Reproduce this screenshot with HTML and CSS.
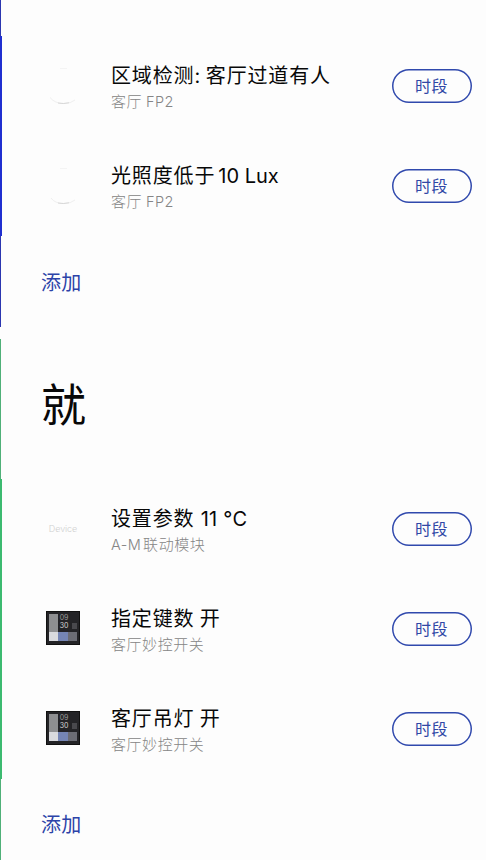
FILE: index.html
```html
<!DOCTYPE html>
<html lang="zh-CN">
<head>
<meta charset="utf-8">
<meta name="viewport" content="width=device-width, initial-scale=1">
<title>自动化</title>
<link rel="stylesheet" href="styles.css">
</head>
<body>
<main class="page">
  <section class="group group-if">
    <div class="row">
      <div class="thumb">
        <svg width="34" height="40" viewBox="0 0 34 40"><path d="M14 2.5h7" stroke="#f4f4f4" fill="none"/><path d="M4 31.5Q9 37.5 17.5 37.5Q25 37.5 29 34" stroke="#efefef" fill="none"/><path d="M12 37Q17 38.2 23 36.8" stroke="#d0d0d0" stroke-width=".8" fill="none"/></svg>
      </div>
      <div class="info">
        <div class="title">区域检测<span class="latin">: </span>客厅过道有人</div>
        <div class="sub">客厅 <span class="latin">FP2</span></div>
      </div>
      <button class="period">时段</button>
    </div>
    <div class="row">
      <div class="thumb">
        <svg width="34" height="40" viewBox="0 0 34 40"><path d="M14 2.5h7" stroke="#f4f4f4" fill="none"/><path d="M5 32Q9 37.5 17.5 37.5Q25 37.5 29 34" stroke="#efefef" fill="none"/><path d="M12 37Q17 38.2 23 36.8" stroke="#d0d0d0" stroke-width=".8" fill="none"/></svg>
      </div>
      <div class="info">
        <div class="title">光照度低于<span class="latin tight">10 Lux</span></div>
        <div class="sub">客厅 <span class="latin">FP2</span></div>
      </div>
      <button class="period">时段</button>
    </div>
    <div class="add">添加</div>
  </section>
  <section class="group group-then">
    <h1 class="heading">就</h1>
    <div class="row">
      <div class="thumb"><span class="placeholder">Device</span></div>
      <div class="info">
        <div class="title">设置参数 <span class="latin degree">11 °C</span></div>
        <div class="sub"><span class="latin module">A-M</span>联动模块</div>
      </div>
      <button class="period">时段</button>
    </div>
    <div class="row">
      <div class="thumb">
        <div class="panel">
          <span class="slab"></span>
          <span class="clock"><span class="hour">09</span><span>30</span></span>
          <span class="knob"></span>
          <span class="key key-white"></span><span class="key key-blue"></span><span class="key key-gray"></span>
        </div>
      </div>
      <div class="info">
        <div class="title">指定键数 <span class="state">开</span></div>
        <div class="sub">客厅妙控开关</div>
      </div>
      <button class="period">时段</button>
    </div>
    <div class="row">
      <div class="thumb">
        <div class="panel">
          <span class="slab"></span>
          <span class="clock"><span class="hour">09</span><span>30</span></span>
          <span class="knob"></span>
          <span class="key key-white"></span><span class="key key-blue"></span><span class="key key-gray"></span>
        </div>
      </div>
      <div class="info">
        <div class="title">客厅吊灯 <span class="state">开</span></div>
        <div class="sub">客厅妙控开关</div>
      </div>
      <button class="period">时段</button>
    </div>
    <div class="add">添加</div>
  </section>
</main>
</body>
</html>
```

FILE: styles.css
```css
* { box-sizing: border-box; }
body {
  margin: 0;
  background: #fdfdfd;
  color: #080808;
  font-family: "Noto Sans CJK SC", sans-serif;
}
.page { height: 860px; overflow: hidden; }
.latin { font-family: Inter, sans-serif; line-height: 1; }
.group { --accent: #2b36b0; --strong: #202fd0; box-shadow: inset 1px 0 var(--accent); }
.group-if { height: 327px; padding-top: 36px; }
.group-then { --accent: #4fb078; --strong: #3cba70; height: 521px; margin-top: 12px; }
.row {
  display: flex;
  align-items: center;
  height: 100px;
  padding-right: 14px;
  box-shadow: inset 2px 0 var(--strong);
}
.thumb { display: flex; justify-content: center; width: 34px; margin-left: 46px; }
.info { flex: 1; margin-left: 31px; padding-top: 3px; white-space: nowrap; }
.title { height: 26px; font-size: 20px; line-height: 26px; letter-spacing: .85px; font-weight: 400; }
.title .latin { font-size: 20px; letter-spacing: 0; }
.title .tight { margin-left: 3px; }
.title .degree { margin-left: 1px; letter-spacing: .2px; }
.sub { height: 26px; font-size: 15px; line-height: 26px; letter-spacing: .55px; font-weight: 300; color: #858585; }
.sub .latin { font-size: 14.5px; letter-spacing: .4px; }
.sub .module { margin-right: 2px; }
.period {
  width: 80px;
  height: 34px;
  padding: 0 1px 2px 0;
  border: 0;
  border-radius: 17px;
  box-shadow: inset 0 0 0 1.5px #3049ad;
  background: transparent;
  color: #3047a6;
  font: 400 16px/30px "Noto Sans CJK SC", sans-serif;
  letter-spacing: .4px;
}
.add { padding: 31px 0 0 41px; font-size: 20px; line-height: 30px; letter-spacing: .3px; color: #2c43a8; }
.group-then .add { padding-top: 30px; }
.heading { margin: 0; height: 140px; padding: 31px 0 0 41px; font-size: 45px; line-height: 66px; font-weight: 400; }
.placeholder { font: 300 9px/12px Inter, sans-serif; letter-spacing: -.1px; color: #d0d0d0; }
.panel {
  display: grid;
  grid-template: 18px 9px / 9px 10px 9px;
  width: 34px;
  height: 34px;
  margin-bottom: 2px;
  padding: 2px;
  border: 1px solid #111;
  background: #242427;
}
.slab { background: #8e8f91; }
.clock { display: flex; flex-direction: column; align-items: center; padding-left: 2px; font: 400 7px/8px Inter, sans-serif; color: #d5d5d5; }
.hour { color: #999; }
.knob { width: 5px; height: 6px; align-self: center; justify-self: end; margin-top: 5px; background: #49494d; }
.key-white { background: #d9dade; }
.key-blue { background: #7585b4; }
.key-gray { background: #6c6d75; }
```
